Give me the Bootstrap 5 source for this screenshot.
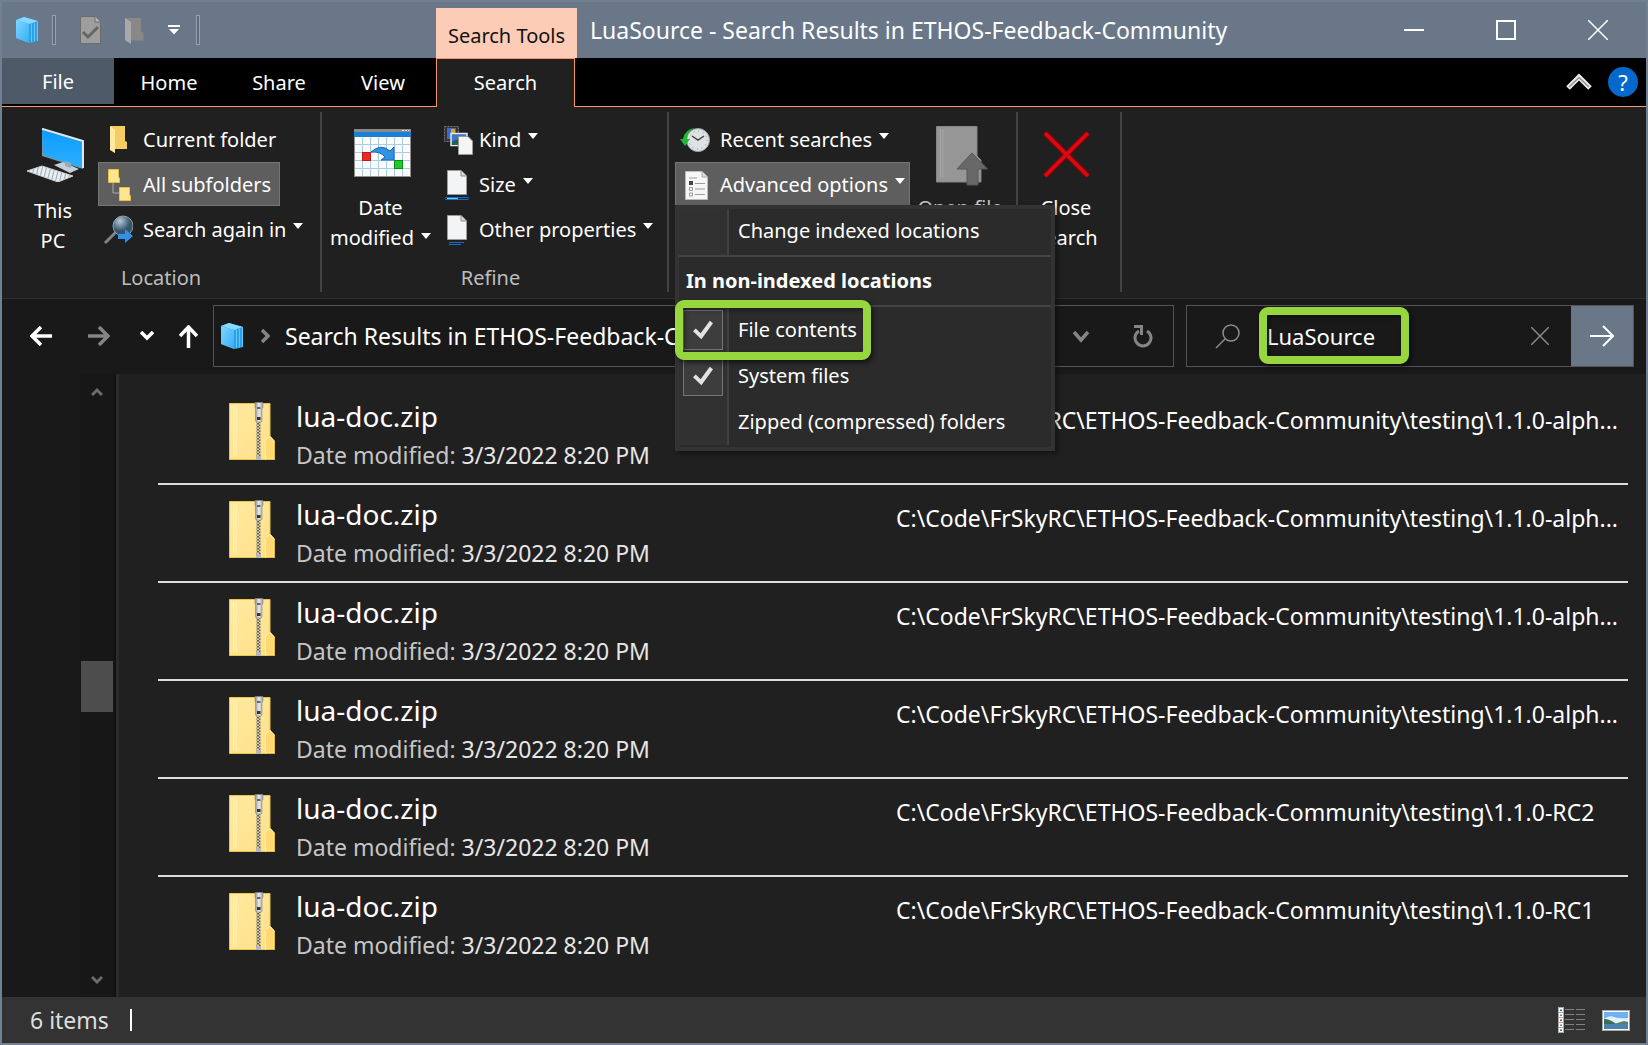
<!DOCTYPE html>
<html lang="en">
<head>
<meta charset="utf-8">
<meta name="viewport" content="width=device-width, initial-scale=1">
<title>LuaSource - Search Results in ETHOS-Feedback-Community</title>
<link href="https://cdn.jsdelivr.net/npm/bootstrap@5.3.0/dist/css/bootstrap.min.css" rel="stylesheet">
<style>
body{font-family:"Noto Sans","Open Sans",sans-serif;font-size:20px;line-height:30px;color:#fff;background:#202020}
button{color:inherit;background:none;border:0;padding:0;text-align:left}
svg{display:block;flex:none}
.window{border:2px solid #718093}
.titlebar{height:56px;background:#697789;padding-right:2px}
.quick{width:434px;padding-left:14px}
.vbar{width:4px;height:30px;border:1px solid #98a1ae;background:#5d6878}
.vbar-first{margin-left:14px}
.qbtn{margin-left:24px}
.tool-head{width:141px;height:50px;background:#fcccb7;color:#111;padding-top:13px}
.win-title{font-size:23px;padding-left:13px}
.cap-btn{width:92px;height:52px;display:flex;align-items:center;justify-content:center}
.tabs{height:49px;background:#000;border-bottom:1px solid #f79767}
.tabs a{color:#fff;text-decoration:none;display:flex;align-items:center;justify-content:center;height:49px}
.tabs .tab-file{width:112px;height:46px;background:#4e5a67;padding-top:2px}
.tab-home,.tab-share{width:110px}.tab-view{width:98px;margin-right:4px}
.tabs .tab-search{width:139px;background:#202020;border:1px solid #f79767;border-bottom:0}
.help{width:30px;height:30px;border-radius:50%;background:#0568cb;text-align:center;font-size:22px;line-height:30px}
.ribbon{height:192px;border-bottom:1px solid #2e2e2e;padding-top:5px}
.group{height:180px;border-right:2px solid #434343;display:flex;flex-direction:column}
.group-label{color:#bdbdbd;text-align:center;margin-top:auto;line-height:28px}
.big{display:flex;flex-direction:column;align-items:center;text-align:center}
.big svg{margin-bottom:14px}
.stack{padding-top:5px}
.small-btn{display:flex;align-items:center;height:44px;border:1px solid transparent;white-space:nowrap;margin-bottom:1px;padding-top:2px}
.small-btn svg.ic{width:30px;margin-right:10px}
.refine svg.ic{margin-right:5px}
.small-btn.on{background:#5e5e5e;border-color:#757575}
.arrow{display:inline-block;border:5px solid transparent;border-top:6px solid #fff;border-bottom:0;margin-left:7px;vertical-align:middle;margin-bottom:8px}
.rmenu{position:absolute;left:0;top:43px;width:380px;z-index:5;background:#2b2b2b;border:4px solid #333;box-shadow:3px 3px 4px rgba(0,0,0,.35);padding-bottom:2px}
.mitem{display:flex;align-items:center;height:46px;width:100%;color:#fff;background:linear-gradient(90deg,#313131 48px,#414141 48px,#414141 50px,transparent 50px);position:relative}
.mitem label{padding-left:15px}
.mitem .mtext{padding-left:59px;padding-bottom:2px}
.mrule{height:2px;background:#444}
.mhead{height:48px;display:flex;align-items:center;padding-left:7px;font-weight:700}
.mitem input{appearance:none;width:40px;height:40px;margin:0 0 0 4px;background:#3d3d3d;border:1px solid #757575;display:flex;align-items:center;justify-content:center;flex:none}
.mitem input::before{content:"";width:20px;height:20px;background:#e2e2e2;clip-path:polygon(0 56%,14% 42%,38% 66%,84% 4%,100% 16%,42% 96%)}
.mitem input.blank{background:none;border-color:transparent}
.mitem input.blank::before{display:none}
.hl{position:absolute;z-index:6;border:8px solid #97d63e;border-radius:9px;box-shadow:2px 3px 5px rgba(0,0,0,.55),inset 2px 2px 4px rgba(0,0,0,.4);pointer-events:none}
.hl-menu{left:-4px;top:-7px;width:196px;height:60px}
.hl-search{left:72px;top:1px;width:150px;height:57px}
.addrbar{height:75px;background:#191919;padding:6px 12px 0 0}
.navs{width:211px;padding-left:28px;height:62px}
.boxed{height:62px;border:1px solid #535353}
.crumb{font-size:23px}
.addr{margin-right:12px;padding-left:7px}
.search-wrap{width:448px;position:relative}
.search-wrap input{background:none;border:0;outline:0;color:#fff;font-size:22px;width:240px;padding:0 0 0 6px}
.go{width:62px;height:60px;background:#697789;display:flex;align-items:center;justify-content:center}
.main-area{height:623px}
.side{width:78px;background:#191919}
.vscroll{width:34px;background:#171717;display:flex;flex-direction:column;align-items:center;padding:13px 0 12px}
.thumb{width:32px;height:51px;background:#4d4d4d}
.split{width:5px;background:#2b2b2b;border-left:2px solid #121212}
.files{padding:13px 18px 0 39px}
.file{height:98px;border-bottom:2px solid #dcdcdc;padding-left:71px;display:flex}
.file:last-child{border-bottom:0}
.file svg{margin-top:15px}
.meta{width:600px;margin-left:21px}
.fname{font-size:28px;line-height:38px;padding-top:10px}
.fdate{font-size:23px;line-height:40px;color:#e6e6e6}
.fdate span{color:#c6c6c6}
.fpath{font-size:23px;padding-top:18px;white-space:nowrap}
.status{height:46px;background:#333;color:#dedede;padding:0 16px 0 28px;font-size:23px}
.caret-bar{width:2px;height:22px;background:#fff;margin-left:21px}
</style>
</head>
<body>
<svg width="0" height="0" class="position-absolute" aria-hidden="true">
<defs>
<linearGradient id="gb" x1="0" y1="0" x2="1" y2="1"><stop offset="0" stop-color="#7fd6ff"/><stop offset="1" stop-color="#37aef5"/></linearGradient>
<linearGradient id="gf" x1="0" y1="0" x2="1" y2="1"><stop offset="0" stop-color="#ffeaa0"/><stop offset="1" stop-color="#ffdf88"/></linearGradient>
<linearGradient id="gm" x1="0" y1="0" x2="0" y2="1"><stop offset="0" stop-color="#0a9bff"/><stop offset="1" stop-color="#2eb0ff"/></linearGradient>
<linearGradient id="gs" x1="0" y1="0" x2="1" y2="0"><stop offset="0" stop-color="#888"/><stop offset=".5" stop-color="#eee"/><stop offset="1" stop-color="#999"/></linearGradient>
<radialGradient id="gl" cx=".35" cy=".25"><stop offset="0" stop-color="#b7c9d6"/><stop offset="1" stop-color="#35546c"/></radialGradient>
<pattern id="zt" width="4" height="3" patternUnits="userSpaceOnUse"><rect width="4" height="3" fill="#d8cfa8"/><rect width="2" height="1.500" fill="#5d5d5d"/><rect x="2" y="1.500" width="2" height="1.500" fill="#5d5d5d"/></pattern>
<pattern id="kb" width="4" height="3" patternUnits="userSpaceOnUse" patternTransform="rotate(14)"><rect width="4" height="3" fill="#e9eef2"/><rect width="1" height="3" fill="#9aa7b2"/></pattern>
<symbol id="books" viewBox="0 0 22 26"><path d="M0 3 8 0 22 4V24L14 26 0 21Z" fill="#2da0e8"/><path d="M0 3 8 0 22 4 13 7Z" fill="#86daff"/><path d="M0 3 13 7V26L0 21Z" fill="url(#gb)"/><path d="M15.500 6.500V25M18.500 5.500V24.500M21.500 4.500V24" stroke="#62c5fc"/></symbol>
<symbol id="page" viewBox="0 0 20 25"><path d="M.5.500H14L19.500 6V24.500H.5Z" fill="#f3f4f6" stroke="#9b9b9b"/><path d="M14 .5V6H19.500" fill="#d6d8da" stroke="#8b8b8b"/></symbol>
<symbol id="zip" viewBox="0 0 46 58"><path d="M.5 1.500H41V34L45.500 39V57.500H.5Z" fill="url(#gf)" stroke="#edc540"/><path d="M4.500 4V54M7 4V54" stroke="#fff3c2"/><path d="M36.500 57V38L41 34.500 45 39V57Z" fill="#ffd873" stroke="#fff0b8"/><path d="M37.500 57.500H45.500V39.500" fill="none" stroke="#e6b93d"/><rect x="27.500" y="19" width="4" height="35" fill="url(#zt)"/><path d="M26 .5H34V5L33 7V18.500Q33 20 31.500 20H28Q26.500 20 26.500 18.500V7L26 5Z" fill="url(#gs)" stroke="#8a8a8a" stroke-width=".6"/><rect x="28" y="5" width="3.500" height="2" fill="#666"/><rect x="28" y="15" width="3.500" height="3" fill="#333"/><rect x="27" y="54" width="5" height="4" fill="#b5b5b5"/></symbol>
</defs></svg>

<div class="window min-vh-100 d-flex flex-column">
<header class="titlebar d-flex align-items-center">
  <div class="quick d-flex align-items-center flex-shrink-0">
    <svg width="22" height="26"><use href="#books"/></svg>
    <span class="vbar vbar-first"></span>
    <button class="qbtn" aria-label="Properties"><svg width="21" height="28" viewBox="0 0 21 28"><path d="M.5.500H15L20.500 6V27.500H.5Z" fill="#9e9e9e" stroke="#6c6c6c"/><path d="M15 .5V6H20.500" fill="#b5b5b5" stroke="#6c6c6c"/><path d="m3 16 5 5L18 11" fill="none" stroke="#666" stroke-width="3"/></svg></button>
    <button class="qbtn" aria-label="New folder"><svg width="19" height="27" viewBox="0 0 19 27"><path d="M0 1H16V14L18.500 16V23.500H6V27L0 23Z" fill="#888"/><path d="m0 1 6 4V27L0 23Z" fill="#a9a9a9"/></svg></button>
    <button class="qbtn" aria-label="Customize"><svg width="12" height="10" viewBox="0 0 12 10"><path d="M0 1H12" stroke="#fff" stroke-width="2"/><path d="M1 4H11L6 9.500Z" fill="#fff"/></svg></button>
    <span class="vbar ms-3 me-1"></span>
  </div>
  <div class="tool-head text-center flex-shrink-0 mt-auto">Search Tools</div>
  <div class="win-title flex-grow-1 text-nowrap">LuaSource - Search Results in ETHOS-Feedback-Community</div>
  <button class="cap-btn" aria-label="Minimize"><svg width="20" height="20"><path d="M0 10H20" stroke="#fff" stroke-width="2"/></svg></button>
  <button class="cap-btn" aria-label="Maximize"><svg width="20" height="20"><rect x="1" y="1" width="18" height="18" fill="none" stroke="#fff" stroke-width="2"/></svg></button>
  <button class="cap-btn" aria-label="Close"><svg width="20" height="20"><path d="m0 0 20 20M20 0 0 20" stroke="#fff" stroke-width="1.500"/></svg></button>
</header>

<nav class="tabs d-flex">
  <a href="#" class="tab-file">File</a><a href="#" class="tab-home">Home</a><a href="#" class="tab-share">Share</a><a href="#" class="tab-view">View</a><a href="#" class="tab-search">Search</a>
  <div class="ms-auto d-flex align-items-center pe-2 gap-3">
    <button aria-label="Collapse ribbon"><svg width="26" height="18" viewBox="0 0 26 18"><path d="M2 15 13 4 24 15" fill="none" stroke="#eee" stroke-width="5"/><path d="M3 14 13 4.500 23 14" fill="none" stroke="#8e8e8e" stroke-width="1.500"/></svg></button>
    <button class="help" aria-label="Help">?</button>
  </div>
</nav>

<section class="ribbon d-flex">
  <div class="group" style="width:320px">
    <div class="d-flex">
      <button class="big" style="width:96px;padding:16px 0 0 6px"><svg class="ms-1" width="57" height="54" viewBox="0 0 57 54"><path d="M15 1 56 13.500V41L15 28Z" fill="#8a9299"/><path d="M15 1 54 13.500V40L16 27Z" fill="url(#gm)"/><path d="M15 .8 56 13V40" fill="none" stroke="#e1e6ea" stroke-width="2"/><path d="m27 37 9-3 16 7-9 4Z" fill="#c5cfd7"/><path d="M38 33 44 35V40L38 38Z" fill="#9ba9b4"/><path d="m0 43 15-5 31 10-15 6Z" fill="url(#kb)" stroke="#c8d0d6"/></svg>This<br>PC</button>
      <div class="stack">
        <button class="small-btn pe-2"><svg class="ic" height="28" viewBox="0 0 30 28"><path d="M11 0H26V15L28 16V23H16V27L11 23Z" fill="#f5cd61"/><path d="m11 0 5 4V27L11 24Z" fill="#ffeaa0"/></svg><span class="ms-1">Current folder</span></button>
        <button class="small-btn on pe-2"><svg class="ic ms-1" height="34" viewBox="0 0 30 34"><path d="M10 14V25H17" fill="none" stroke="#aaa"/><path d="M5.500 1.500H15.500V9L16.500 10V14.500H5.500Z" fill="#ffe58f" stroke="#e8c040"/><path d="M16.500 19.500H26.500V27L27.500 28V32.500H16.500Z" fill="#ffe58f" stroke="#e8c040"/></svg>All subfolders</button>
        <button class="small-btn"><svg class="ic ms-1" height="30" viewBox="0 0 30 30"><path d="M2 28 14 16" stroke="#7b858d" stroke-width="3"/><circle cx="20" cy="11" r="10" fill="url(#gl)" stroke="#90a0ab"/><path d="M15 19H22V14L30 21 22 28V24H15Z" fill="#3391e5"/></svg>Search again in<span class="arrow"></span></button>
      </div>
    </div>
    <div class="group-label">Location</div>
  </div>
  <div class="group" style="width:347px">
    <div class="d-flex">
      <button class="big text-nowrap" style="width:117px;padding-top:17px"><svg style="margin-bottom:16px" class="ms-1" width="57" height="48" viewBox="0 0 57 48"><rect x=".5" y=".5" width="56" height="47" fill="#fbfbfb" stroke="#8f8f8f"/><rect width="57" height="3" fill="#8a8a8a"/><rect y="3" width="57" height="5" fill="#1b7fd6"/><path d="M8.500 8V47M16.500 8V47M24.500 8V47M32.500 8V47M40.500 8V47M48.500 8V47M1 15.500H56M1 23.500H56M1 31.500H56M1 39.500H56" stroke="#a9cde6"/><path d="M48 1.500H55" stroke="#ddd" stroke-dasharray="2 1"/><rect x="8.500" y="23.500" width="8" height="8" fill="#f02a20" stroke="#b02018"/><rect x="40.500" y="31.500" width="8" height="8" fill="#1ecb2a" stroke="#128a1b"/><path d="M17 23Q27 14 36 22L40 18V31H27L31 28Q26 22 17 23Z" fill="#3193e2" stroke="#1569b3"/></svg>Date<br><span>modified<span class="arrow"></span></span></button>
      <div class="stack refine ps-1">
        <button class="small-btn"><svg class="ic" height="29" viewBox="0 0 30 29"><rect x=".5" y=".5" width="14" height="15" fill="#333" stroke="#777" stroke-dasharray="2 1"/><rect x="3" y="2" width="9" height="11" fill="#3b69cf"/><rect x="7" y="3" width="4" height="4" fill="#d8a81f"/><rect x="7" y="7.500" width="16" height="12" fill="#3979c8" stroke="#e8e8e8" stroke-width="1.500"/><path d="M8 16q5-5 9 0v3H8Z" fill="#25615b"/><path d="M14.500 10.500H24L28.500 15V28.500H14.500Z" fill="#f5f5f6" stroke="#999"/></svg>Kind<span class="arrow"></span></button>
        <button class="small-btn"><svg class="ic" height="30" viewBox="0 0 30 30"><svg x="3" width="20" height="25"><use href="#page"/></svg><rect x="2" y="27.500" width="22" height="2" fill="#123" stroke="#0f73cd"/><path d="M3 28.500H14" stroke="#7cc7ff"/></svg>Size<span class="arrow"></span></button>
        <button class="small-btn"><svg class="ic" height="30" viewBox="0 0 30 30"><svg x="3" width="20" height="25"><use href="#page"/></svg><path d="M5 27.500H20M5 29.500H17" stroke="#0f73cd"/></svg>Other properties<span class="arrow"></span></button>
      </div>
    </div>
    <div class="group-label pe-2">Refine</div>
  </div>
  <div class="group" style="width:349px">
    <div class="d-flex">
      <div class="stack" style="padding-left:6px">
        <button class="small-btn ps-1"><svg class="ic" height="26" viewBox="0 0 30 26"><circle cx="18" cy="13" r="11.500" fill="#dfe2e4" stroke="#989fa4"/><circle cx="18" cy="13" r="9" fill="none" stroke="#888" stroke-dasharray="1 3.700"/><path d="m12 9 6 4 6-4" fill="none" stroke="#444" stroke-width="1.500"/><path d="M15 1Q7 4 7 12H10L5 19 0 12H3Q5 2 15 1Z" fill="#22b83a"/></svg>Recent searches<span class="arrow"></span></button>
        <div class="position-relative">
        <button class="small-btn on ps-1" style="width:235px" aria-expanded="true"><svg class="ic" height="29" viewBox="0 0 30 29"><path d="M5.500.500H22L27.500 6V28.500H5.500Z" fill="#f6f6f6" stroke="#bbb"/><path d="M22 .5V6H27.500" fill="#ddd" stroke="#aaa"/><path d="M9 7H17M15 12.500H25M15 18H25M15 23.500H25" stroke="#9c9c9c"/><rect x="9" y="10" width="4" height="4" fill="#444"/><path d="M9.500 16.500H12.500V19.500H9.500ZM9.500 22H12.500V25H9.500Z" fill="none" stroke="#999"/></svg>Advanced options<span class="arrow"></span></button>
        <div class="rmenu">
          <button class="mitem"><span class="mtext">Change indexed locations</span></button>
          <div class="mrule"></div>
          <div class="mhead">In non-indexed locations</div>
          <div class="mrule"></div>
          <div class="mitem"><input type="checkbox" id="c1" checked><label for="c1">File contents</label><span class="hl hl-menu"></span></div>
          <div class="mitem"><input type="checkbox" id="c2" checked><label for="c2">System files</label></div>
          <div class="mitem"><input type="checkbox" id="c3" class="blank"><label for="c3">Zipped (compressed) folders</label></div>
        </div>
        </div>
      </div>
      <button class="big text-nowrap" style="width:100px;padding-top:14px;color:#c4c4c4"><svg style="margin-bottom:7px" class="ms-1" width="52" height="60" viewBox="0 0 52 60"><path d="M.5.500H41V30L45 34V56H.5Z" fill="#969697" stroke="#858585"/><path d="M4.500 3V52M7 3V52" stroke="#a6a6a6"/><path d="M36 27 51.500 43H42V59H31V43H21Z" fill="#686868" stroke="#575757"/></svg>Open file<br>location</button>
    </div>
  </div>
  <div class="group" style="width:104px">
    <button class="big" style="padding-top:19px;margin-left:-6px"><svg style="margin-bottom:15px" width="47" height="47" viewBox="0 0 47 47"><path d="m2 2 43 43M45 2 2 45" stroke="#7d060b" stroke-width="6"/><path d="m2 2 43 43M45 2 2 45" stroke="#df0810" stroke-width="3.500"/></svg>Close<br>Search</button>
  </div>
</section>

<section class="addrbar d-flex">
  <div class="navs d-flex align-items-center flex-shrink-0">
    <button aria-label="Back"><svg width="22" height="20" viewBox="0 0 22 20"><path d="M11 1 2 10 11 19M2 10H22" fill="none" stroke="#fff" stroke-width="3.500"/></svg></button>
    <button aria-label="Forward" style="margin-left:36px"><svg width="22" height="20" viewBox="0 0 22 20"><path d="m11 1 9 9-9 9M20 10H0" fill="none" stroke="#858585" stroke-width="3.500"/></svg></button>
    <button aria-label="Recent" style="margin-left:30px"><svg width="14" height="10" viewBox="0 0 14 10"><path d="m1 1 6 6 6-6" fill="none" stroke="#fff" stroke-width="3.500"/></svg></button>
    <button aria-label="Up" style="margin-left:25px"><svg width="19" height="23" viewBox="0 0 19 23"><path d="m1 11 8.500-9 8.500 9M9.500 2V23" fill="none" stroke="#fff" stroke-width="3.500"/></svg></button>
  </div>
  <div class="addr boxed d-flex align-items-center flex-grow-1">
    <svg width="22" height="26"><use href="#books"/></svg>
    <svg style="margin:0 14px 0 18px" width="10" height="16" viewBox="0 0 10 16"><path d="m1 2 6 6-6 6" fill="none" stroke="#858585" stroke-width="3.500"/></svg>
    <span class="crumb text-nowrap">Search Results in ETHOS-Feedback-Community</span>
    <button class="ms-auto" aria-label="Previous locations"><svg width="18" height="13" viewBox="0 0 18 13"><path d="m2 2 7 8 7-8" fill="none" stroke="#858585" stroke-width="3.500"/></svg></button>
    <button aria-label="Refresh" style="margin:0 20px 0 43px"><svg width="20" height="24" viewBox="0 0 20 24"><path d="M14 7A8 8 0 1 1 6 7" fill="none" stroke="#858585" stroke-width="3"/><path d="M1 1H10V11H7V4H1Z" fill="#858585"/></svg></button>
  </div>
  <div class="search-wrap boxed d-flex align-items-center flex-shrink-0">
    <svg style="margin-left:28px;margin-right:17px" width="25" height="25" viewBox="0 0 25 25"><circle cx="16" cy="9" r="8" fill="none" stroke="#8d8d8d" stroke-width="1.500"/><path d="M10 15 1 24" stroke="#8d8d8d" stroke-width="1.500"/></svg>
    <input type="text" class="ms-1" aria-label="Search" value="LuaSource"><span class="hl hl-search"></span>
    <button class="ms-auto" aria-label="Clear" style="margin-right:22px"><svg width="18" height="18"><path d="m0 0 18 18M18 0 0 18" stroke="#888" stroke-width="1.500"/></svg></button>
    <button class="go" aria-label="Go"><svg width="24" height="22" viewBox="0 0 24 22"><path d="M0 11H23M13 1 23 11 13 21" fill="none" stroke="#fff" stroke-width="2"/></svg></button>
  </div>
</section>

<main class="main-area d-flex flex-grow-1">
  <div class="side"></div>
  <div class="vscroll"><svg width="12" height="11" viewBox="0 0 12 11"><path d="m1 8 5-5 5 5" fill="none" stroke="#6c6c6c" stroke-width="3"/></svg><div class="thumb my-auto"></div><svg width="12" height="11" viewBox="0 0 12 11"><path d="m1 3 5 5 5-5" fill="none" stroke="#6c6c6c" stroke-width="3"/></svg></div>
  <div class="split"></div>
  <div class="files flex-grow-1 overflow-hidden">
    <div class="file"><svg width="46" height="58"><use href="#zip"/></svg><div class="meta flex-shrink-0"><div class="fname">lua-doc.zip</div><div class="fdate"><span>Date modified:</span> 3/3/2022 8:20 PM</div></div><div class="fpath">C:\Code\FrSkyRC\ETHOS-Feedback-Community\testing\1.1.0-alph...</div></div>
    <div class="file"><svg width="46" height="58"><use href="#zip"/></svg><div class="meta flex-shrink-0"><div class="fname">lua-doc.zip</div><div class="fdate"><span>Date modified:</span> 3/3/2022 8:20 PM</div></div><div class="fpath">C:\Code\FrSkyRC\ETHOS-Feedback-Community\testing\1.1.0-alph...</div></div>
    <div class="file"><svg width="46" height="58"><use href="#zip"/></svg><div class="meta flex-shrink-0"><div class="fname">lua-doc.zip</div><div class="fdate"><span>Date modified:</span> 3/3/2022 8:20 PM</div></div><div class="fpath">C:\Code\FrSkyRC\ETHOS-Feedback-Community\testing\1.1.0-alph...</div></div>
    <div class="file"><svg width="46" height="58"><use href="#zip"/></svg><div class="meta flex-shrink-0"><div class="fname">lua-doc.zip</div><div class="fdate"><span>Date modified:</span> 3/3/2022 8:20 PM</div></div><div class="fpath">C:\Code\FrSkyRC\ETHOS-Feedback-Community\testing\1.1.0-alph...</div></div>
    <div class="file"><svg width="46" height="58"><use href="#zip"/></svg><div class="meta flex-shrink-0"><div class="fname">lua-doc.zip</div><div class="fdate"><span>Date modified:</span> 3/3/2022 8:20 PM</div></div><div class="fpath">C:\Code\FrSkyRC\ETHOS-Feedback-Community\testing\1.1.0-RC2</div></div>
    <div class="file"><svg width="46" height="58"><use href="#zip"/></svg><div class="meta flex-shrink-0"><div class="fname">lua-doc.zip</div><div class="fdate"><span>Date modified:</span> 3/3/2022 8:20 PM</div></div><div class="fpath">C:\Code\FrSkyRC\ETHOS-Feedback-Community\testing\1.1.0-RC1</div></div>
  </div>
</main>

<footer class="status d-flex align-items-center">
  <span>6 items</span><span class="caret-bar"></span>
  <button class="ms-auto" aria-label="Details view"><svg width="27" height="26" viewBox="0 0 27 26"><rect width="6" height="26" fill="#aaa"/><path d="M1 1H5V5H1ZM1 6H5V10H1ZM1 11H5V15H1ZM1 16H5V20H1ZM1 21H5V25H1Z" fill="#fff"/><path d="M2 2.500H4V4H2ZM2 22.500H4V24H2Z" fill="#2a78a8"/><path d="M2 7.500H4V9H2ZM2 17.500H4V19H2Z" fill="#678a8a"/><path d="M2 12.500H4V14H2Z" fill="#c33"/><path d="M7 2.500H16M18 2.500H27M7 7.500H16M18 7.500H27M7 12.500H16M18 12.500H27M7 17.500H16M18 17.500H27M7 22.500H16M18 22.500H27" stroke="#808080"/></svg></button>
  <button aria-label="Large icons view" style="margin-left:17px"><svg width="28" height="21" viewBox="0 0 28 21"><rect width="28" height="21" fill="#aaa"/><rect x="1" y="1" width="26" height="19" fill="#fff"/><rect x="2" y="2" width="24" height="17" fill="#6fb0f2"/><path d="M2 9q5-4 10-2t14 1v6H2Z" fill="#e3f1fb"/><path d="M2 9q6 0 12 5H2Z" fill="#3b6d57"/><path d="M12 14 22 11 26 12V14Z" fill="#55806a"/><rect x="2" y="14" width="24" height="5" fill="#4c83ac"/></svg></button>
</footer>
</div>
<script src="https://cdn.jsdelivr.net/npm/bootstrap@5.3.0/dist/js/bootstrap.bundle.min.js"></script>
</body>
</html>
